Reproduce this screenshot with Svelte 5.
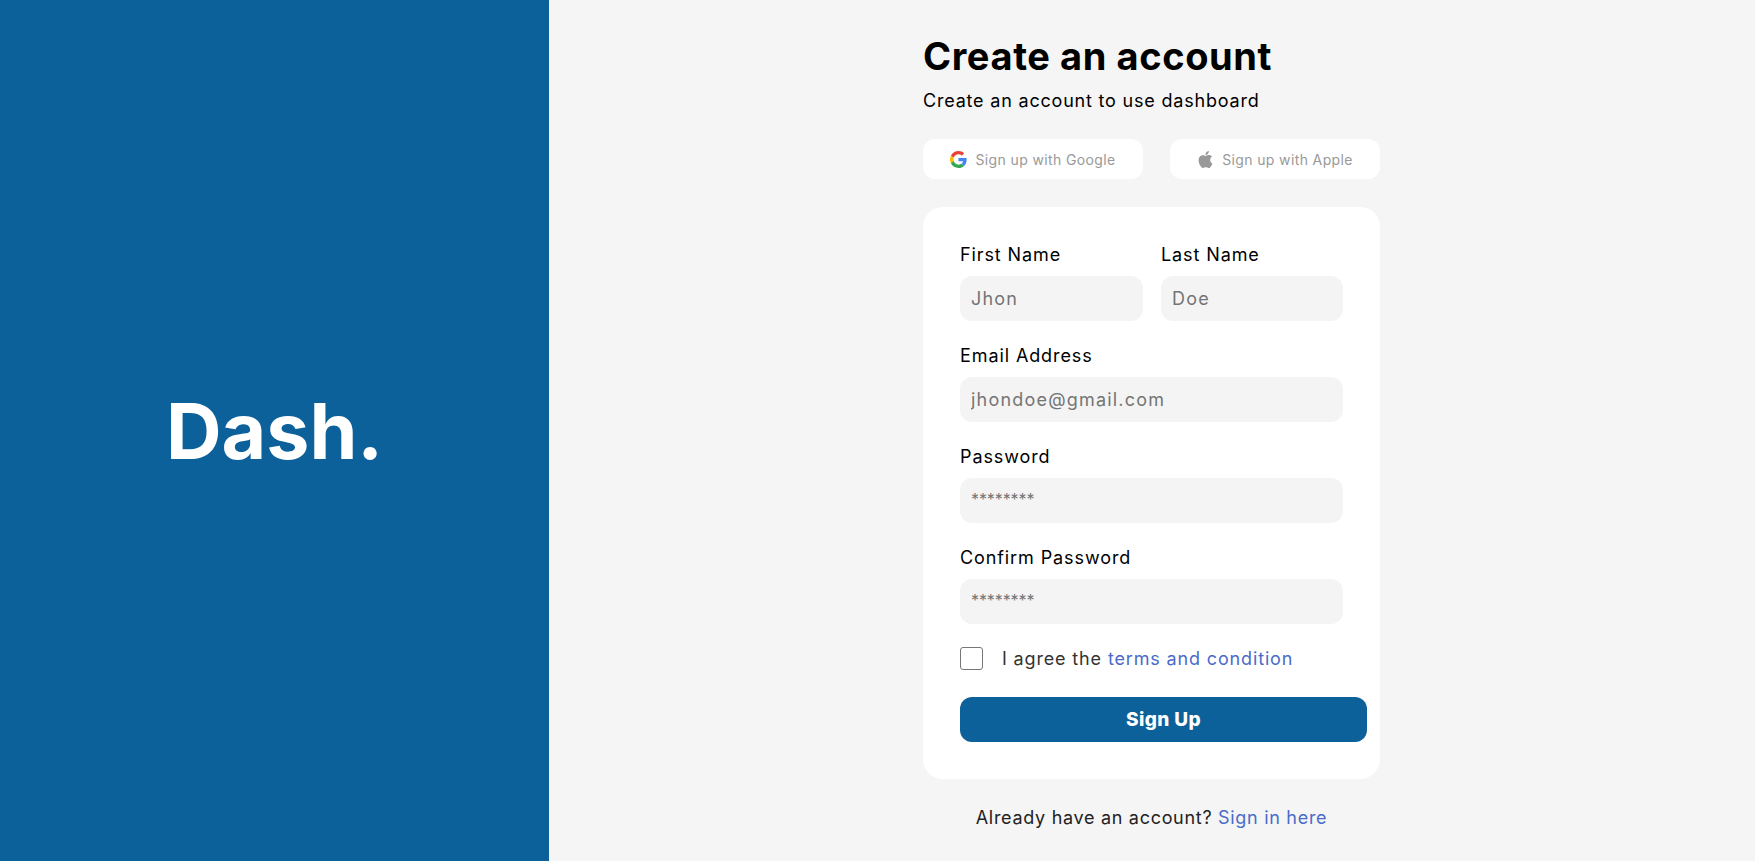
<script>
  const fields = [
    { label: "Email Address", placeholder: "jhondoe@gmail.com", type: "email" },
    { label: "Password", placeholder: "********", type: "password" },
    { label: "Confirm Password", placeholder: "********", type: "password" }
  ];
</script>

<div class="page">
  <aside class="brand">
    <h1>Dash.</h1>
  </aside>

  <main class="content">
    <div class="column">
      <h2>Create an account</h2>
      <p class="sub">Create an account to use dashboard</p>

      <div class="socials">
        <button class="social google">
          <svg viewBox="0 0 48 48" width="17" height="17">
            <path fill="#EA4335" d="M24 9.5c3.54 0 6.71 1.22 9.21 3.6l6.85-6.85C35.9 2.38 30.47 0 24 0 14.62 0 6.51 5.38 2.56 13.22l7.98 6.19C12.43 13.72 17.74 9.5 24 9.5z"/>
            <path fill="#4285F4" d="M46.98 24.55c0-1.57-.15-3.09-.38-4.55H24v9.02h12.94c-.58 2.96-2.26 5.48-4.78 7.18l7.73 6c4.51-4.18 7.09-10.36 7.09-17.65z"/>
            <path fill="#FBBC05" d="M10.53 28.59c-.48-1.45-.76-2.99-.76-4.59s.27-3.14.76-4.59l-7.98-6.19C.92 16.46 0 20.12 0 24c0 3.88.92 7.54 2.56 10.78l7.97-6.19z"/>
            <path fill="#34A853" d="M24 48c6.48 0 11.93-2.13 15.89-5.81l-7.73-6c-2.15 1.45-4.92 2.3-8.16 2.3-6.26 0-11.57-4.22-13.47-9.91l-7.98 6.19C6.51 42.62 14.62 48 24 48z"/>
          </svg>
          <span>Sign up with Google</span>
        </button>
        <button class="social apple">
          <svg viewBox="0 0 24 24" width="17" height="17">
            <path fill="#999" d="M12.152 6.896c-.948 0-2.415-1.078-3.96-1.04-2.04.027-3.91 1.183-4.961 3.014-2.117 3.675-.546 9.103 1.519 12.09 1.013 1.454 2.208 3.09 3.792 3.039 1.52-.065 2.09-.987 3.935-.987 1.831 0 2.35.987 3.96.948 1.637-.026 2.676-1.48 3.676-2.948 1.156-1.688 1.636-3.325 1.662-3.415-.039-.013-3.182-1.221-3.22-4.857-.026-3.04 2.48-4.494 2.597-4.559-1.429-2.09-3.623-2.324-4.39-2.376-2-.156-3.675 1.09-4.61 1.09zM15.53 3.83c.843-1.012 1.4-2.427 1.245-3.83-1.207.052-2.662.805-3.532 1.818-.78.896-1.454 2.338-1.273 3.714 1.338.104 2.715-.688 3.559-1.701"/>
          </svg>
          <span>Sign up with Apple</span>
        </button>
      </div>

      <form class="card" on:submit|preventDefault>
        <div class="names">
          <label class="field">
            <span>First Name</span>
            <input type="text" placeholder="Jhon" />
          </label>
          <label class="field">
            <span>Last Name</span>
            <input type="text" placeholder="Doe" />
          </label>
        </div>

        {#each fields as f}
          <label class="field">
            <span>{f.label}</span>
            <input class:secret={f.type === "password"} type={f.type} placeholder={f.placeholder} />
          </label>
        {/each}

        <div class="agree">
          <input id="terms" class="check" type="checkbox" />
          <label for="terms">I agree the <a href="#terms">terms and condition</a></label>
        </div>

        <button class="submit" type="submit">Sign Up</button>
      </form>

      <p class="foot">Already have an account? <a href="#signin">Sign in here</a></p>
    </div>
  </main>
</div>

<style>
  :global(body) {
    margin: 0;
    background: #f5f5f5;
    font-family: "Inter", "Noto Sans", sans-serif;
  }
  .page {
    display: flex;
    height: 861px;
    overflow: hidden;
  }
  .brand {
    width: 549px;
    flex: none;
    background: #0d619b;
    display: flex;
    align-items: center;
    justify-content: center;
  }
  .brand h1 {
    margin: 0;
    color: #fff;
    font-size: 77px;
    line-height: 88px;
    font-weight: 700;
  }
  .content {
    flex: 1;
    display: flex;
    justify-content: center;
    padding-right: 1px;
  }
  .column {
    width: 457px;
    padding-top: 34px;
  }
  h2 {
    margin: 0;
    font-size: 38px;
    line-height: 44px;
    font-weight: 700;
    color: #000;
    letter-spacing: 0.6px;
  }
  .sub {
    margin: 12px 0 0;
    font-size: 18px;
    line-height: 22px;
    color: #000;
    letter-spacing: 0.8px;
  }
  .socials {
    display: flex;
    justify-content: space-between;
    margin-top: 27px;
  }
  .social {
    height: 40px;
    border: 0;
    border-radius: 12px;
    background: #fff;
    display: flex;
    align-items: center;
    justify-content: center;
    gap: 8px;
    font: inherit;
    font-size: 14px;
    letter-spacing: 0.37px;
    color: #999;
    padding: 0;
  }
  .google { width: 220px; }
  .apple { width: 210px; }
  .card {
    margin-top: 28px;
    width: 457px;
    height: 572px;
    box-sizing: border-box;
    padding: 37px;
    background: #fff;
    border-radius: 20px;
    display: flex;
    flex-direction: column;
    gap: 24px;
  }
  .names {
    display: grid;
    grid-template-columns: 183px 182px;
    gap: 18px;
  }
  .field {
    display: flex;
    flex-direction: column;
    gap: 11px;
  }
  .field span {
    padding-top: 1px;
    font-size: 18px;
    line-height: 20px;
    color: #000;
    letter-spacing: 0.9px;
  }
  .field input {
    height: 45px;
    box-sizing: border-box;
    width: 100%;
    border: 0;
    border-radius: 12px;
    background: #f4f4f4;
    padding: 0 11px;
    font: inherit;
    font-size: 18px;
    letter-spacing: 1.2px;
    outline: none;
  }
  .field input.secret {
    font-size: 16px;
    letter-spacing: -0.1px;
    padding-bottom: 3px;
  }
  .field input::placeholder {
    color: #757575;
    opacity: 1;
  }
  .agree {
    display: flex;
    align-items: center;
    gap: 19px;
    margin-top: -1px;
    height: 23px;
    font-size: 18px;
    color: #333;
    letter-spacing: 0.85px;
  }
  .check {
    appearance: none;
    margin: 0;
    width: 23px;
    height: 23px;
    box-sizing: border-box;
    border: 1px solid #767676;
    border-radius: 3px;
    background: #fff;
  }
  a {
    color: #4a6bc9;
    text-decoration: none;
  }
  .submit {
    width: 407px;
    height: 45px;
    margin-top: 3px;
    flex: none;
    border: 0;
    border-radius: 12px;
    background: #0d619b;
    color: #fff;
    font: inherit;
    font-size: 19px;
    font-weight: 800;
    letter-spacing: 0.4px;
  }
  .foot {
    margin: 28px 0 0;
    text-align: center;
    font-size: 18px;
    line-height: 22px;
    color: #222;
    letter-spacing: 0.7px;
  }
</style>
